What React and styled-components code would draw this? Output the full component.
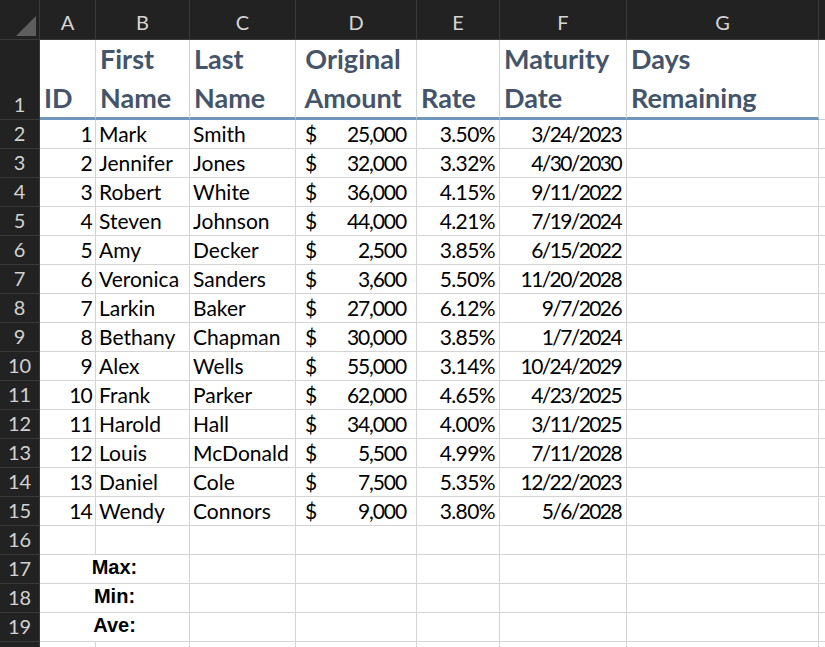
import React from "react";
import styled, { createGlobalStyle } from "styled-components";

const GlobalStyle = createGlobalStyle`
  html, body {
    margin: 0;
    padding: 0;
    background: #ffffff;
    overflow: hidden;
  }
`;

const columns = ["A", "B", "C", "D", "E", "F", "G", ""];
const colWidths = "40px 56px 94px 106px 121px 83px 127px 192px 1fr";

const loans = [
  [1, "Mark", "Smith", "25,000", "3.50%", "3/24/2023"],
  [2, "Jennifer", "Jones", "32,000", "3.32%", "4/30/2030"],
  [3, "Robert", "White", "36,000", "4.15%", "9/11/2022"],
  [4, "Steven", "Johnson", "44,000", "4.21%", "7/19/2024"],
  [5, "Amy", "Decker", "2,500", "3.85%", "6/15/2022"],
  [6, "Veronica", "Sanders", "3,600", "5.50%", "11/20/2028"],
  [7, "Larkin", "Baker", "27,000", "6.12%", "9/7/2026"],
  [8, "Bethany", "Chapman", "30,000", "3.85%", "1/7/2024"],
  [9, "Alex", "Wells", "55,000", "3.14%", "10/24/2029"],
  [10, "Frank", "Parker", "62,000", "4.65%", "4/23/2025"],
  [11, "Harold", "Hall", "34,000", "4.00%", "3/11/2025"],
  [12, "Louis", "McDonald", "5,500", "4.99%", "7/11/2028"],
  [13, "Daniel", "Cole", "7,500", "5.35%", "12/22/2023"],
  [14, "Wendy", "Connors", "9,000", "3.80%", "5/6/2028"],
];

const Sheet = styled.div`
  display: grid;
  grid-template-columns: ${colWidths};
  grid-template-rows: 40px 80px repeat(19, 29px);
  width: 825px;
  height: 647px;
  overflow: hidden;
  font-family: Lato, "Liberation Sans", sans-serif;
  color: #000;
`;

const Corner = styled.div`
  background: #222222;
  border-right: 1px solid #3a3a3a;
  border-bottom: 1px solid #3a3a3a;
  display: flex;
  align-items: flex-end;
  justify-content: flex-end;
  padding: 0 3px 3px 0;
  box-sizing: border-box;
`;

const Triangle = styled.div`
  width: 0;
  height: 0;
  border-left: 20px solid transparent;
  border-bottom: 20px solid #5e5e5e;
`;

const ColHead = styled.div`
  background: #222222;
  border-right: 1px solid #3a3a3a;
  border-bottom: 1px solid #3a3a3a;
  box-sizing: border-box;
  color: #d6d6d6;
  font-size: 20px;
  display: flex;
  align-items: flex-end;
  justify-content: center;
  padding-bottom: 5px;
`;

const RowHead = styled.div`
  background: #222222;
  border-right: 1px solid #3a3a3a;
  border-bottom: 1px solid #3a3a3a;
  box-sizing: border-box;
  color: #d2d2d2;
  font-size: 20px;
  display: flex;
  align-items: flex-end;
  justify-content: center;
  padding-bottom: 3px;
`;

const Cell = styled.div`
  box-sizing: border-box;
  border-right: 1px solid #d4d4d4;
  border-bottom: 1px solid #d4d4d4;
  font-size: 21px;
  letter-spacing: ${(p) => p.$tight ?? 0}px;
  white-space: nowrap;
  display: flex;
  align-items: flex-end;
  justify-content: ${(p) =>
    p.$align === "right" ? "flex-end" : p.$align === "center" ? "center" : "flex-start"};
  padding: 0 ${(p) => p.$padR ?? 3}px 2px ${(p) => p.$padL ?? 3}px;
  grid-column: ${(p) => p.$span || "auto"};
`;

const HeadCell = styled(Cell)`
  border-bottom: 3px solid #6f97bb;
  font-size: 27px;
  font-weight: 700;
  color: #44546a;
  line-height: 39px;
  white-space: normal;
  text-align: ${(p) => p.$align || "left"};
  padding-bottom: 0;
`;

const HeadText = styled.div`
  width: 100%;
`;

const Money = styled(Cell)`
  justify-content: space-between;
  padding: 0 10px 2px 9px;
`;

const Summary = styled(Cell)`
  font-family: "Liberation Sans", Arial, sans-serif;
  font-weight: 700;
  font-size: 20px;
  padding-bottom: 4px;
`;

function HeaderRow() {
  const heads = [
    ["ID", "left"],
    [<>First<br />Name</>, "left"],
    [<>Last<br />Name</>, "left"],
    [<>Original<br />Amount</>, "center"],
    ["Rate", "left"],
    [<>Maturity<br />Date</>, "left"],
    [<>Days<br />Remaining</>, "left"],
  ];
  return (
    <>
      <RowHead>1</RowHead>
      {heads.map(([text, align], i) => (
        <HeadCell key={i} $align={align} $padL={i === 3 ? 0 : 4} $padR={i === 3 ? 6 : 2}>
          <HeadText>{text}</HeadText>
        </HeadCell>
      ))}
      <Cell />
    </>
  );
}

export default function App() {
  return (
    <>
      <GlobalStyle />
      <Sheet>
        <Corner>
          <Triangle />
        </Corner>
        {columns.map((c, i) => (
          <ColHead key={i}>{c}</ColHead>
        ))}
        <HeaderRow />
        {loans.map((r, i) => (
          <React.Fragment key={r[0]}>
            <RowHead>{i + 2}</RowHead>
            <Cell $align="right" $tight={-0.8}>{r[0]}</Cell>
            <Cell>{r[1]}</Cell>
            <Cell>{r[2]}</Cell>
            <Money $tight={-1.1}>
              <span>$</span>
              <span>{r[3]}</span>
            </Money>
            <Cell $align="right" $padR={4} $tight={-0.6}>{r[4]}</Cell>
            <Cell $align="right" $padR={5} $tight={-1.6}>{r[5]}</Cell>
            <Cell />
            <Cell />
          </React.Fragment>
        ))}
        <RowHead>16</RowHead>
        {Array.from({ length: 8 }).map((_, i) => (
          <Cell key={i} />
        ))}
        {["Max:", "Min:", "Ave:"].map((label, i) => (
          <React.Fragment key={label}>
            <RowHead>{17 + i}</RowHead>
            <Summary $span="span 2" $align="center">{label}</Summary>
            {Array.from({ length: 6 }).map((_, j) => (
              <Cell key={j} />
            ))}
          </React.Fragment>
        ))}
        <RowHead />
        {Array.from({ length: 8 }).map((_, i) => (
          <Cell key={i} />
        ))}
      </Sheet>
    </>
  );
}
